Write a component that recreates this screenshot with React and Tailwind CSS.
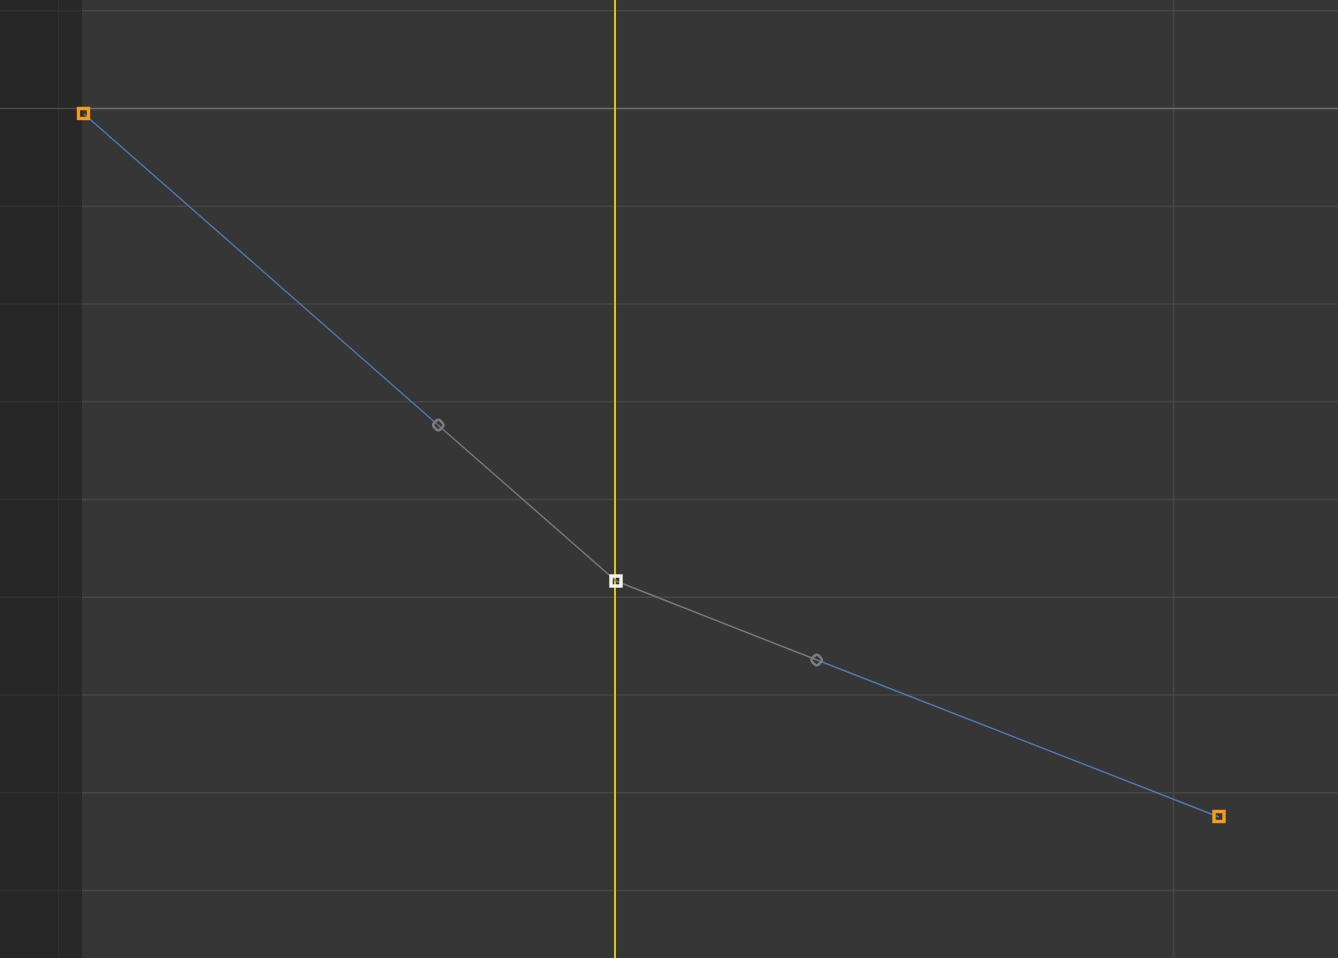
import React from 'react';

const rows = [10.75, 206.25, 304, 401.75, 499.5, 597.25, 695, 792.75, 890.5];

const Key = ({ x, y, color }) => (
  <rect x={x - 5} y={y - 5} width="10" height="10" fill="none" stroke={color} strokeWidth="3.4" />
);

const Handle = ({ x, y }) => (
  <rect
    x={x - 4.5}
    y={y - 4.5}
    width="9"
    height="9"
    rx="3"
    fill="none"
    stroke="#7c7c7c"
    strokeWidth="2.6"
    transform={`rotate(45 ${x} ${y})`}
  />
);

const CurveEditor = () => {
  return (
    <div className="relative h-[958px] w-full overflow-hidden flex bg-[#363636]">
      {/* left ruler strip */}
      <div className="w-[82px] h-full flex bg-[#262626]">
        <div className="w-[59px] h-full border-r border-[#313131]" />
        <div className="flex-1 h-full bg-[#282828]" />
      </div>
      <div className="flex-1 h-full bg-[#363636]" />

      <svg
        className="absolute inset-0"
        width="1338"
        height="958"
        viewBox="0 0 1338 958"
      >
        {rows.map((y) => (
          <g key={y}>
            <line x1="0" y1={y} x2="82" y2={y} stroke="#303030" strokeWidth="1.5" />
            <line x1="82" y1={y} x2="1338" y2={y} stroke="#474747" strokeWidth="1.5" />
          </g>
        ))}
        <line x1="1173.5" y1="0" x2="1173.5" y2="958" stroke="#474747" strokeWidth="1.5" />
        <line x1="0" y1="108.5" x2="82" y2="108.5" stroke="#4a4a4a" strokeWidth="1.5" />
        <line x1="82" y1="108.5" x2="1338" y2="108.5" stroke="#6e6e6e" strokeWidth="1.6" />

        {/* time cursor */}
        <line x1="615" y1="0" x2="615" y2="958" stroke="#d9c800" strokeWidth="2" />

        {/* curve */}
        <line x1="84" y1="114" x2="438" y2="425" stroke="#4f79b4" strokeWidth="1.4" />
        <line x1="817" y1="660" x2="1219" y2="817" stroke="#4f79b4" strokeWidth="1.4" />
        {/* tangents */}
        <line x1="438" y1="425" x2="616" y2="581" stroke="#7a7a7a" strokeWidth="1.4" />
        <line x1="616" y1="581" x2="817" y2="660" stroke="#7a7a7a" strokeWidth="1.4" />

        <Handle x={438.3} y={425} />
        <Handle x={816.7} y={660} />

        <Key x={83.5} y={113.5} color="#f59d1a" />
        <Key x={616} y={581} color="#f2f2f2" />
        <Key x={1219} y={816.5} color="#f59d1a" />
      </svg>
    </div>
  );
};

export default function App() {
  return <CurveEditor />;
}
